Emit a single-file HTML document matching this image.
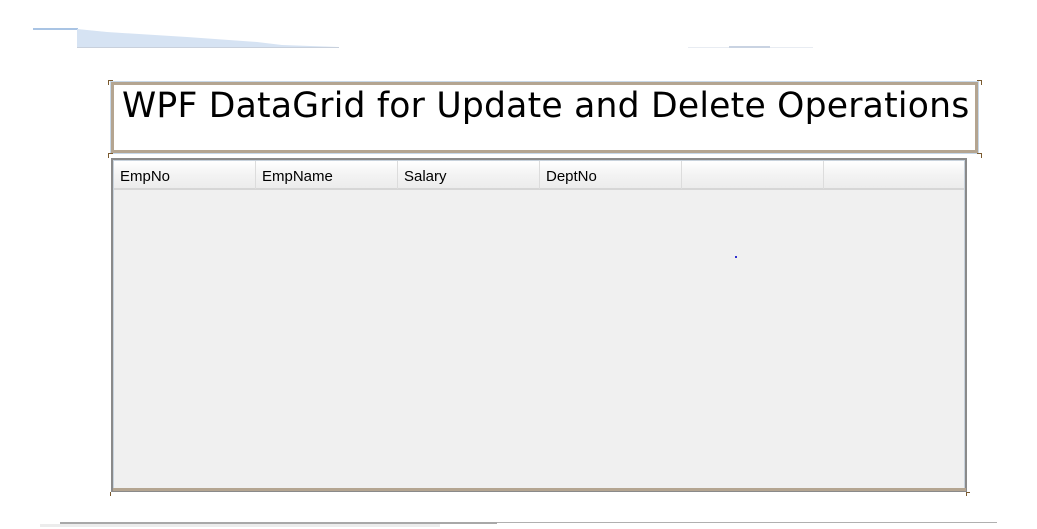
<!DOCTYPE html>
<html><head><style>
body{margin:0;width:1037px;height:529px;background:#fff;position:relative;overflow:hidden;font-family:"Liberation Sans",sans-serif}
.a{position:absolute}
</style></head><body>
<div class="a" style="left:33px;top:28px;width:45px;height:2px;background:#a9c4e4"></div>
<svg class="a" style="left:77px;top:29px" width="262" height="20"><polygon points="0,0 30,3 110,8 180,13 205,16 262,18 262,19 0,19" fill="#d6e3f3"/><line x1="0" y1="18.5" x2="262" y2="18.5" stroke="#c8d0dc"/></svg>
<div class="a" style="left:688px;top:47px;width:125px;height:1px;background:#e8ecf2"></div>
<div class="a" style="left:729px;top:46px;width:41px;height:2px;background:#c9d3e2"></div>

<div class="a" style="left:111px;top:82px;width:861px;height:65px;border:3px solid #b4a591;outline:1px solid #c8d8e8;background:#fff"></div>
<div class="a" style="left:122px;top:86px;font-family:'DejaVu Sans',sans-serif;font-size:34.6px;letter-spacing:0.22px;color:#000;white-space:nowrap">WPF DataGrid for Update and Delete Operations</div>
<div class="a" style="left:108px;top:80px;width:4px;height:4px;border-left:1px solid #7a5a30;border-top:1px solid #7a5a30"></div>
<div class="a" style="left:977px;top:80px;width:4px;height:4px;border-right:1px solid #7a5a30;border-top:1px solid #7a5a30"></div>
<div class="a" style="left:108px;top:153px;width:4px;height:4px;border-left:1px solid #7a5a30;border-top:1px solid #7a5a30"></div>
<div class="a" style="left:977px;top:153px;width:4px;height:4px;border-right:1px solid #7a5a30;border-top:1px solid #7a5a30"></div>

<div class="a" style="left:111px;top:158px;width:852px;height:330px;border:2px solid #8a8a8a;background:#f0f0f0;box-shadow:inset 0 0 0 1px #c8d2dc"></div>
<div class="a" style="left:113px;top:488px;width:853px;height:3px;background:#b4a591"></div>
<div class="a" style="left:114px;top:161px;width:850px;height:27px;background:linear-gradient(#fff,#f3f3f3 50%,#ececec);border-bottom:2px solid #d6d6d6"></div>
<div class="a" style="left:255px;top:161px;width:1px;height:28px;background:#dcdcdc"></div>
<div class="a" style="left:397px;top:161px;width:1px;height:28px;background:#dcdcdc"></div>
<div class="a" style="left:539px;top:161px;width:1px;height:28px;background:#dcdcdc"></div>
<div class="a" style="left:681px;top:161px;width:1px;height:28px;background:#dcdcdc"></div>
<div class="a" style="left:823px;top:161px;width:1px;height:28px;background:#dcdcdc"></div>
<div class="a" style="left:120px;top:168px;font-size:15px">EmpNo</div>
<div class="a" style="left:262px;top:168px;font-size:15px">EmpName</div>
<div class="a" style="left:404px;top:168px;font-size:15px">Salary</div>
<div class="a" style="left:546px;top:168px;font-size:15px">DeptNo</div>
<div class="a" style="left:735px;top:256px;width:2px;height:2px;background:#3030d0"></div>
<div class="a" style="left:110px;top:492px;width:1px;height:4px;background:#7a5a30"></div>
<div class="a" style="left:966px;top:492px;width:4px;height:1px;background:#7a5a30"></div>
<div class="a" style="left:966px;top:492px;width:1px;height:4px;background:#7a5a30"></div>

<div class="a" style="left:60px;top:522px;width:437px;height:2px;background:#a8a8a8"></div>
<div class="a" style="left:497px;top:522px;width:500px;height:1px;background:#b0b0b0"></div>
<div class="a" style="left:40px;top:524px;width:400px;height:3px;background:#ececec"></div>
</body></html>
